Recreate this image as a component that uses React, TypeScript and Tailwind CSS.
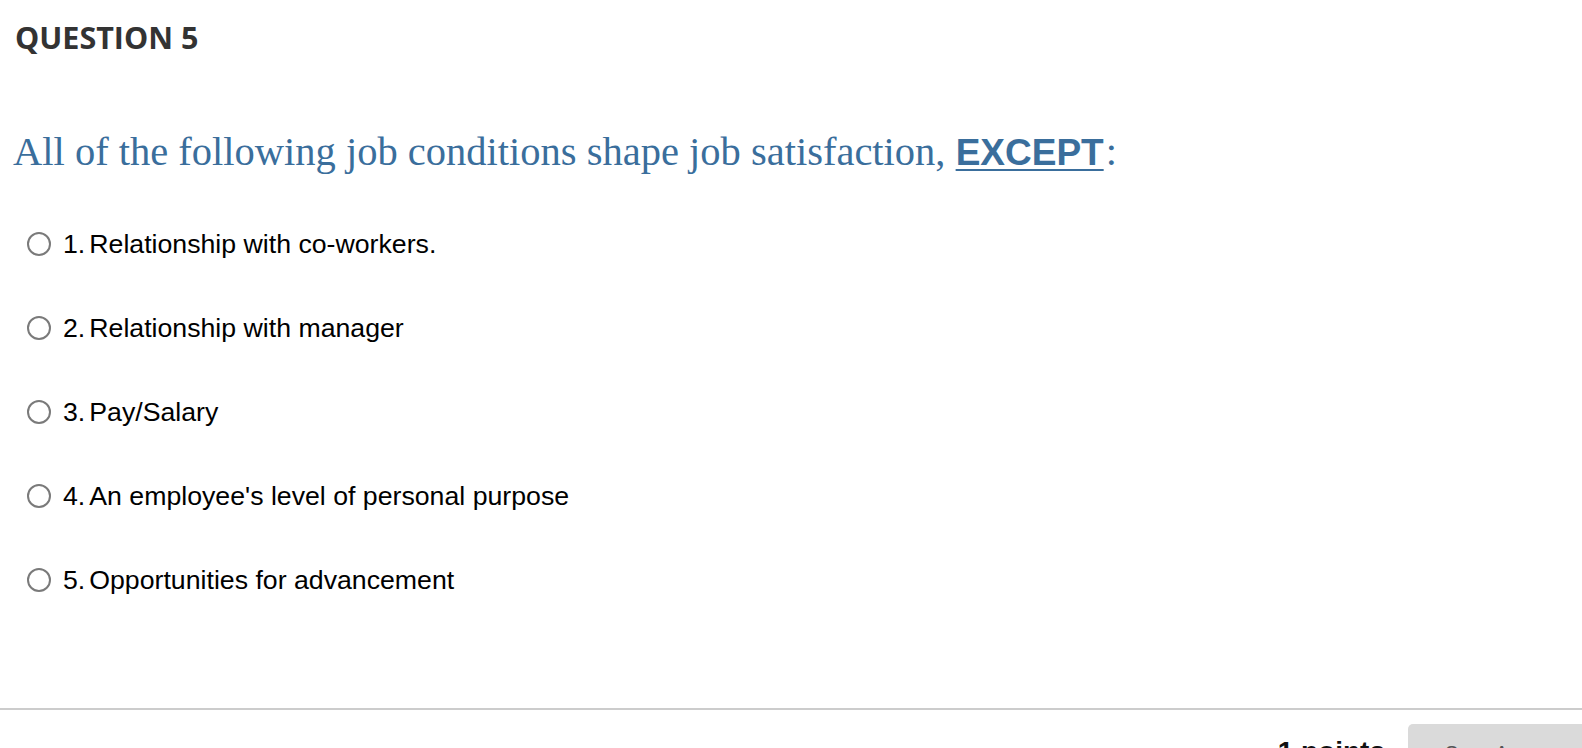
import React from "react";

const options = [
  "Relationship with co-workers.",
  "Relationship with manager",
  "Pay/Salary",
  "An employee's level of personal purpose",
  "Opportunities for advancement",
];

export default function App() {
  return (
    <div className="w-[1582px] h-[748px] overflow-hidden bg-white">
      <div className="h-[74px] pl-[15px] flex items-center">
        <h2
          className="text-[30.5px] font-bold text-[#333333] leading-none"
          style={{ fontFamily: '"Open Sans", sans-serif' }}
        >
          QUESTION 5
        </h2>
      </div>
      <div
        className="mt-[54px] pl-[13px] h-[48px] leading-[48px] text-[40.5px] text-[#3a6e9c] whitespace-nowrap"
        style={{ fontFamily: '"Liberation Serif", serif' }}
      >
        All of the following job conditions shape job satisfaction,{" "}
        <span
          className="text-[37px] font-bold underline decoration-[2px] underline-offset-[4px]"
          style={{ fontFamily: '"Liberation Sans", Arial, sans-serif' }}
        >
          EXCEPT
        </span>
        <span className="ml-[2px]">:</span>
      </div>
      <div
        className="mt-[26px] flex flex-col"
        style={{ fontFamily: '"Liberation Sans", Arial, sans-serif' }}
      >
        {options.map((o, i) => (
          <label key={i} className="h-[84px] flex items-center pl-[27px]">
            <span className="w-[24px] h-[24px] rounded-full border-2 border-[#7a7a7a] bg-white shrink-0" />
            <span className="ml-[12px] text-[26.7px] text-black leading-none">
              <span className="mr-[4px]">{i + 1}.</span>
              {o}
            </span>
          </label>
        ))}
      </div>
      <div className="mt-[86px] h-[2px] bg-[#cccccc]" />
      <div
        className="mr-[-20px] pt-[14px] flex justify-end items-start"
        style={{ fontFamily: '"Liberation Sans", Arial, sans-serif' }}
      >
        <div className="pt-[14px] mr-[23px] text-[28px] font-bold text-[#111] leading-none">
          1 points
        </div>
        <div className="w-[194px] h-[60px] rounded-[5px] bg-[#dadada] pl-[37px] pt-[19px] text-[20px] text-[#555] leading-none whitespace-nowrap">
          Save Answer
        </div>
      </div>
    </div>
  );
}
